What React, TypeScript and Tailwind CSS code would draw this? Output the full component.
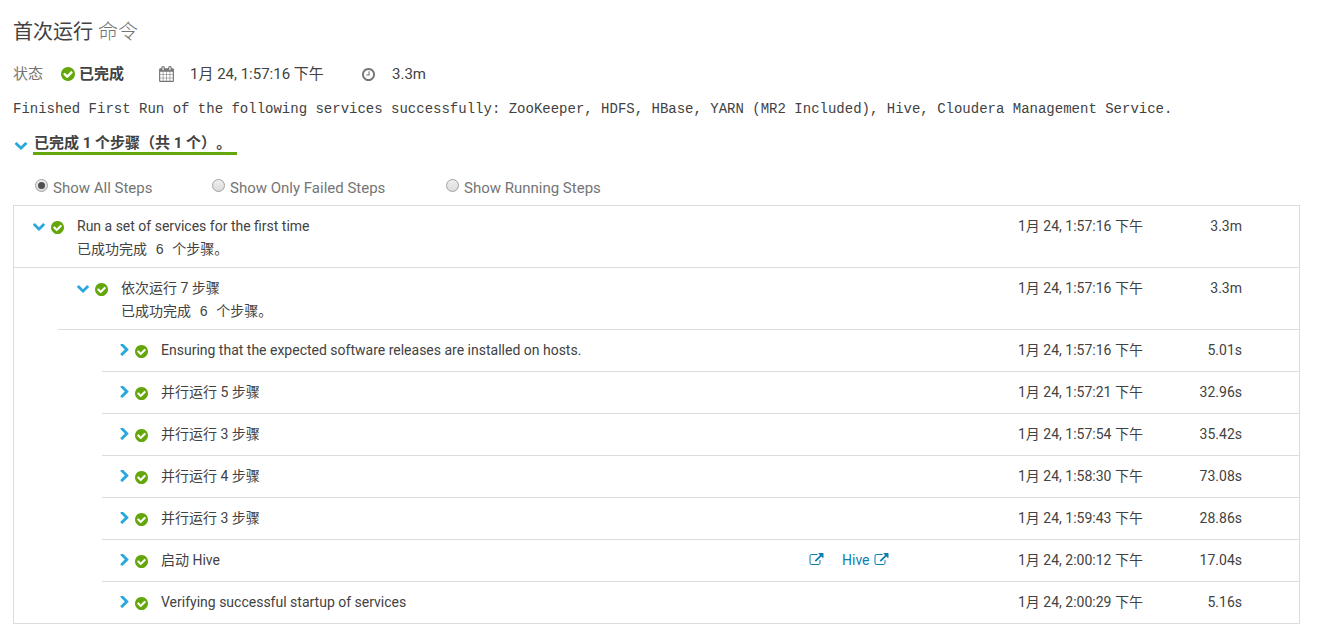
import React from 'react';

const ICONS = {
  check:
    'M1412 734q0-28-18-46l-91-90q-19-19-45-19t-45 19l-408 407-226-226q-19-19-45-19t-45 19l-91 90q-18 18-18 46 0 27 18 45l362 362q19 19 45 19 27 0 46-19l543-543q18-18 18-45zm252 162q0 209-103 385.5t-279.5 279.5-385.5 103-385.5-103-279.5-279.5-103-385.5 103-385.5 279.5-279.5 385.5-103 385.5 103 279.5 279.5 103 385.5z',
  external:
    'M1408 928v320q0 119-84.5 203.5t-203.5 84.5h-832q-119 0-203.5-84.5t-84.5-203.5v-832q0-119 84.5-203.5t203.5-84.5h704q14 0 23 9t9 23v64q0 14-9 23t-23 9h-704q-66 0-113 47t-47 113v832q0 66 47 113t113 47h832q66 0 113-47t47-113v-320q0-14 9-23t23-9h64q14 0 23 9t9 23zm384-864v512q0 26-19 45t-45 19-45-19l-176-176-652 652q-10 10-23 10t-23-10l-114-114q-10-10-10-23t10-23l652-652-176-176q-19-19-19-45t19-45 45-19h512q26 0 45 19t19 45z',
  clock:
    'M1024 544v448q0 14-9 23t-23 9h-320q-14 0-23-9t-9-23v-64q0-14 9-23t23-9h224v-352q0-14 9-23t23-9h64q14 0 23 9t9 23zm416 352q0-148-73-273t-198-198-273-73-273 73-198 198-73 273 73 273 198 198 273 73 273-73 198-198 73-273zm224 0q0 209-103 385.5t-279.5 279.5-385.5 103-385.5-103-279.5-279.5-103-385.5 103-385.5 279.5-279.5 385.5-103 385.5 103 279.5 279.5 103 385.5z',
  calendar:
    'M192 1664h288v-288h-288v288zm352 0h320v-288h-320v288zm-352-352h288v-320h-288v320zm352 0h320v-320h-320v320zm-352-384h288v-288h-288v288zm736 736h320v-288h-320v288zm-384-736h320v-288h-320v288zm768 736h288v-288h-288v288zm-384-352h320v-320h-320v320zm-352-864v-288q0-13-9.5-22.5t-22.5-9.5h-64q-13 0-22.5 9.5t-9.5 22.5v288q0 13 9.5 22.5t22.5 9.5h64q13 0 22.5-9.5t9.5-22.5zm736 864h288v-320h-288v320zm-384-384h320v-288h-320v288zm384 0h288v-288h-288v288zm32-480v-288q0-13-9.5-22.5t-22.5-9.5h-64q-13 0-22.5 9.5t-9.5 22.5v288q0 13 9.5 22.5t22.5 9.5h64q13 0 22.5-9.5t9.5-22.5zm384-64v1280q0 52-38 90t-90 38h-1408q-52 0-90-38t-38-90v-1280q0-52 38-90t90-38h128v-96q0-66 47-113t113-47h64q66 0 113 47t47 113v96h384v-96q0-66 47-113t113-47h64q66 0 113 47t47 113v96h128q52 0 90 38t38 90z',
  down: 'M1683 808l-742 741q-19 19-45 19t-45-19l-742-741q-19-19-19-45.5t19-45.5l166-165q19-19 45-19t45 19l531 531 531-531q19-19 45-19t45 19l166 165q19 19 19 45.5t-19 45.5z',
  right:
    'M1363 877l-742 742q-19 19-45 19t-45-19l-166-166q-19-19-19-45t19-45l531-531-531-531q-19-19-19-45t19-45l166-166q19-19 45-19t45 19l742 742q19 19 19 45t-19 45z',
};

const BOXES = {
  check: '128 128 1536 1536',
  external: '0 0 1792 1664',
  clock: '128 128 1536 1536',
  calendar: '64 0 1664 1792',
  down: '90 533 1612 1035',
  right: '346 135 1036 1503',
};

const Icon = ({ name, className }: { name: keyof typeof ICONS; className: string }) => (
  <svg viewBox={BOXES[name]} fill="currentColor" className={`shrink-0 ${className}`} aria-hidden="true">
    <path d={ICONS[name]} />
  </svg>
);

type Step = {
  title: string;
  detail?: string;
  date: string;
  duration: string;
  service?: string;
  children?: Step[];
};

const steps: Step[] = [
  {
    title: 'Run a set of services for the first time',
    detail: '已成功完成 6 个步骤。',
    date: '1月 24, 1:57:16 下午',
    duration: '3.3m',
    children: [
      {
        title: '依次运行 7 步骤',
        detail: '已成功完成 6 个步骤。',
        date: '1月 24, 1:57:16 下午',
        duration: '3.3m',
        children: [
          {
            title: 'Ensuring that the expected software releases are installed on hosts.',
            date: '1月 24, 1:57:16 下午',
            duration: '5.01s',
          },
          { title: '并行运行 5 步骤', date: '1月 24, 1:57:21 下午', duration: '32.96s' },
          { title: '并行运行 3 步骤', date: '1月 24, 1:57:54 下午', duration: '35.42s' },
          { title: '并行运行 4 步骤', date: '1月 24, 1:58:30 下午', duration: '73.08s' },
          { title: '并行运行 3 步骤', date: '1月 24, 1:59:43 下午', duration: '28.86s' },
          { title: '启动 Hive', date: '1月 24, 2:00:12 下午', duration: '17.04s', service: 'Hive' },
          {
            title: 'Verifying successful startup of services',
            date: '1月 24, 2:00:29 下午',
            duration: '5.16s',
          },
        ],
      },
    ],
  },
];

const filters = [
  { label: 'Show All Steps', width: 'w-[177px]' },
  { label: 'Show Only Failed Steps', width: 'w-[234px]' },
  { label: 'Show Running Steps', width: 'w-[177px]' },
];

const StepItem = ({ step, last }: { step: Step; last: boolean }) => {
  const open = !!step.children;

  // the last leaf sits on the frame's own bottom border
  return (
    <li>
      <div
        className={`flex items-start border-[#dcdcdc] pt-[9px] pr-[57px] leading-[23px] ${open ? 'pb-[7px]' : 'pb-[9px]'} ${last && !open ? '' : 'border-b'}`}
      >
        <button
          type="button"
          aria-expanded={open}
          aria-label={step.title}
          className={`flex h-[23px] shrink-0 items-center text-[#29a7de] ${open ? 'ml-[19px] w-[18px]' : 'ml-[18px] w-[15px]'}`}
        >
          {open ? <Icon name="down" className="h-2 w-3" /> : <Icon name="right" className="mb-0.5 h-3 w-[9px]" />}
        </button>
        <Icon name="check" className="mt-[6px] mr-[13px] size-[13px] text-[#64a70b]" />
        <div className="min-w-0 flex-1">
          <div>{step.title}</div>
          {step.detail && (
            <pre className="mt-0.5 font-['Liberation_Mono','Noto_Sans_CJK_SC',monospace] text-sm leading-5">
              {step.detail}
            </pre>
          )}
        </div>
        <div className="flex w-[209px] shrink-0 gap-[18px] text-[#0b7fad]">
          {step.service && (
            <>
              <a href="#details" aria-label="详细信息" className="flex h-[23px] items-center">
                <Icon name="external" className="mb-0.5 h-[13px] w-[15px]" />
              </a>
              <a href="#hive" className="flex h-[23px] items-center gap-1">
                {step.service}
                <Icon name="external" className="mb-0.5 h-[13px] w-[15px]" />
              </a>
            </>
          )}
        </div>
        <div className="w-[140px] shrink-0 whitespace-nowrap">{step.date}</div>
        <div className="w-[84px] shrink-0 text-right">{step.duration}</div>
      </div>
      {step.children && (
        <ul className="pl-11">
          {step.children.map((child, i) => (
            <StepItem key={i} step={child} last={i === step.children!.length - 1} />
          ))}
        </ul>
      )}
    </li>
  );
};

export default function App() {
  const [filter, setFilter] = React.useState(filters[0].label);

  return (
    <main className="bg-white pt-[18px] pr-[19px] pb-3 pl-[13px] font-[Roboto,'Noto_Sans_CJK_SC',sans-serif] text-sm text-[#424242]">
      <h1 className="text-xl leading-6">
        首次运行 <small className="text-xl font-light text-[#757575]">命令</small>
      </h1>

      <div className="mt-4 flex items-center text-[15px] leading-6">
        <span className="w-12 text-[#757575]">状态</span>
        <span className="flex w-[98px] items-center gap-1 font-bold">
          <Icon name="check" className="size-[14px] text-[#64a70b]" />
          已完成
        </span>
        <Icon name="calendar" className="h-4 w-[15px] text-[#757575]" />
        <span className="ml-4 w-[172px]">1月 24, 1:57:16 下午</span>
        <Icon name="clock" className="size-[13px] text-[#757575]" />
        <span className="ml-[17px]">3.3m</span>
      </div>

      <p className="mt-[13px] font-['Liberation_Mono',monospace] text-sm leading-5">
        Finished First Run of the following services successfully: ZooKeeper, HDFS, HBase, YARN (MR2 Included), Hive,
        Cloudera Management Service.
      </p>

      <button type="button" aria-expanded="true" className="mt-[15px] flex items-center gap-[5px] pl-px">
        <Icon name="down" className="mt-0.5 h-2 w-[14px] text-[#29a7de]" />
        <span className="border-b-3 border-[#64a70b] pr-1.5 pl-px text-[15px] leading-[18px] font-bold [text-spacing-trim:space-all]">
          已完成 1 个步骤（共 1 个）。
        </span>
      </button>

      <div className="mt-[23px] flex pl-[22px] text-[15px] leading-5 text-[#757575]">
        {filters.map(({ label, width }) => (
          <label key={label} className={`flex gap-[5px] ${width}`}>
            <input
              type="radio"
              name="steps"
              checked={filter === label}
              onChange={() => setFilter(label)}
              className="mt-px flex size-[13px] appearance-none items-center justify-center rounded-full border border-[#a0a0a0] bg-linear-to-b from-[#eeeeee] to-[#dcdcdc] checked:before:size-[7px] checked:before:rounded-full checked:before:bg-[#505050]"
            />
            {label}
          </label>
        ))}
      </div>

      <ul className="mt-[7px] border border-[#dcdcdc]">
        {steps.map((step, i) => (
          <StepItem key={step.title} step={step} last={i === steps.length - 1} />
        ))}
      </ul>
    </main>
  );
}
